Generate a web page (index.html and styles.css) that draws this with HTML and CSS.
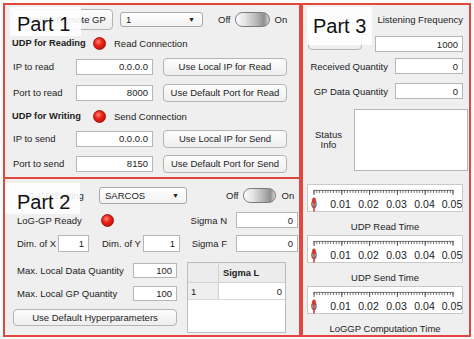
FILE: index.html
```html
<!DOCTYPE html>
<html>
<head>
<meta charset="utf-8">
<link rel="stylesheet" href="styles.css">
</head>
<body>
<div class="app">
  <section class="part p1">
    <div class="row r-top">
      <button class="btn btn-init">Initialize Remote GP</button>
      <div class="dd dd1"><span>1</span><span class="caret">▼</span></div>
      <div class="switch sw1"><span>Off</span><span class="toggle"></span><span class="on">On</span></div>
    </div>
    <div class="row r-sect"><b class="sect">UDP for Reading</b><span class="led"></span><span class="conn">Read Connection</span></div>
    <div class="row r-field gap7"><span class="lbl1">IP to read</span><div class="inp inp1">0.0.0.0</div><button class="btn btn-use">Use Local IP for Read</button></div>
    <div class="row r-field gap7"><span class="lbl1">Port to read</span><div class="inp inp1">8000</div><button class="btn btn-use">Use Default Port for Read</button></div>
    <div class="row r-sect gap7"><b class="sect">UDP for Writing</b><span class="led"></span><span class="conn">Send Connection</span></div>
    <div class="row r-field gap6"><span class="lbl1">IP to send</span><div class="inp inp1">0.0.0.0</div><button class="btn btn-use">Use Local IP for Send</button></div>
    <div class="row r-field gap6"><span class="lbl1">Port to send</span><div class="inp inp1">8150</div><button class="btn btn-use">Use Default Port for Send</button></div>
    <div class="tag tag1">Part 1</div>
  </section>

  <section class="part p2">
    <div class="row r2-1">
      <span class="lbl-set">LoG-GP Setting</span>
      <div class="dd dd2"><span>SARCOS</span><span class="caret">▼</span></div>
      <div class="switch sw2"><span>Off</span><span class="toggle t2"></span><span class="on">On</span></div>
    </div>
    <div class="row r2-2">
      <span class="lbl-ready">LoG-GP Ready</span><span class="led"></span>
      <div class="sig"><span class="sig-lbl">Sigma N</span><div class="inp inp-sig">0</div></div>
    </div>
    <div class="row r2-3">
      <span class="lbl-dim">Dim. of X</span><div class="inp inp-dx">1</div>
      <span class="lbl-dim dimy">Dim. of Y</span><div class="inp inp-dy">1</div>
      <div class="sig"><span class="sig-lbl">Sigma F</span><div class="inp inp-sig">0</div></div>
    </div>
    <div class="lower">
      <div class="lcol">
        <div class="row r-q"><span class="lbl-q">Max. Local Data Quantity</span><div class="inp inp-q">100</div></div>
        <div class="row r-q q2"><span class="lbl-q">Max. Local GP Quantity</span><div class="inp inp-q">100</div></div>
        <button class="btn btn-hyp">Use Default Hyperparameters</button>
      </div>
      <div class="tbl">
        <div class="thead"><div class="c0"></div><div class="c1 th">Sigma L</div></div>
        <div class="trow"><div class="c0 rh">1</div><div class="c1 num">0</div></div>
      </div>
    </div>
    <div class="tag tag2">Part 2</div>
  </section>

  <section class="part p3">
    <div class="top3">
      <button class="btn btn-listen"></button>
      <div class="lf">
        <span class="lf-lbl">Listening Frequency</span>
        <div class="inp inp-lf">1000</div>
      </div>
    </div>
    <div class="row r3 rq1"><span class="lbl3">Received Quantity</span><div class="inp inp3">0</div></div>
    <div class="row r3 rq2"><span class="lbl3">GP Data Quantity</span><div class="inp inp3">0</div></div>
    <div class="row status"><span class="st-lbl">Status<br>Info</span><div class="st-box"></div></div>

    <div class="gauge g-first">
      <svg width="156" height="28" viewBox="0 0 156 28">
        <defs><pattern id="mt1" x="6.6" y="0" width="2.78" height="28" patternUnits="userSpaceOnUse"><rect x="0" y="6" width="0.8" height="3.2" fill="#555"/></pattern></defs>
        <rect x="0.5" y="0.5" width="155" height="27" fill="#fff" stroke="#c9c9c9"/>
        <line x1="6.6" y1="6.4" x2="146.4" y2="6.4" stroke="#555" stroke-width="0.8"/>
        <rect x="6.6" y="6" width="140" height="3.2" fill="url(#mt1)"/>
        <g stroke="#444" stroke-width="0.9"><line x1="7" y1="6" x2="7" y2="11"/><line x1="34.8" y1="6" x2="34.8" y2="11"/><line x1="62.6" y1="6" x2="62.6" y2="11"/><line x1="90.4" y1="6" x2="90.4" y2="11"/><line x1="118.2" y1="6" x2="118.2" y2="11"/><line x1="146" y1="6" x2="146" y2="11"/></g>
        <g class="gl" text-anchor="middle"><text x="7" y="24">0</text><text x="33.5" y="24">0.01</text><text x="61.5" y="24">0.02</text><text x="89.5" y="24">0.03</text><text x="117.5" y="24">0.04</text><text x="145" y="24">0.05</text></g>
        <line x1="7" y1="14" x2="7" y2="27.5" stroke="#d8392e" stroke-width="1.6"/>
        <ellipse cx="7" cy="16.5" rx="1.9" ry="3" fill="#d8392e"/>
      </svg>
    </div>
    <div class="cap">UDP Read Time</div>

    <div class="gauge">
      <svg width="156" height="28" viewBox="0 0 156 28">
        <defs><pattern id="mt2" x="6.6" y="0" width="2.78" height="28" patternUnits="userSpaceOnUse"><rect x="0" y="6" width="0.8" height="3.2" fill="#555"/></pattern></defs>
        <rect x="0.5" y="0.5" width="155" height="27" fill="#fff" stroke="#c9c9c9"/>
        <line x1="6.6" y1="6.4" x2="146.4" y2="6.4" stroke="#555" stroke-width="0.8"/>
        <rect x="6.6" y="6" width="140" height="3.2" fill="url(#mt2)"/>
        <g stroke="#444" stroke-width="0.9"><line x1="7" y1="6" x2="7" y2="11"/><line x1="34.8" y1="6" x2="34.8" y2="11"/><line x1="62.6" y1="6" x2="62.6" y2="11"/><line x1="90.4" y1="6" x2="90.4" y2="11"/><line x1="118.2" y1="6" x2="118.2" y2="11"/><line x1="146" y1="6" x2="146" y2="11"/></g>
        <g class="gl" text-anchor="middle"><text x="7" y="24">0</text><text x="33.5" y="24">0.01</text><text x="61.5" y="24">0.02</text><text x="89.5" y="24">0.03</text><text x="117.5" y="24">0.04</text><text x="145" y="24">0.05</text></g>
        <line x1="7" y1="14" x2="7" y2="27.5" stroke="#d8392e" stroke-width="1.6"/>
        <ellipse cx="7" cy="16.5" rx="1.9" ry="3" fill="#d8392e"/>
      </svg>
    </div>
    <div class="cap">UDP Send Time</div>

    <div class="gauge">
      <svg width="156" height="28" viewBox="0 0 156 28">
        <defs><pattern id="mt3" x="6.6" y="0" width="2.78" height="28" patternUnits="userSpaceOnUse"><rect x="0" y="6" width="0.8" height="3.2" fill="#555"/></pattern></defs>
        <rect x="0.5" y="0.5" width="155" height="27" fill="#fff" stroke="#c9c9c9"/>
        <line x1="6.6" y1="6.4" x2="146.4" y2="6.4" stroke="#555" stroke-width="0.8"/>
        <rect x="6.6" y="6" width="140" height="3.2" fill="url(#mt3)"/>
        <g stroke="#444" stroke-width="0.9"><line x1="7" y1="6" x2="7" y2="11"/><line x1="34.8" y1="6" x2="34.8" y2="11"/><line x1="62.6" y1="6" x2="62.6" y2="11"/><line x1="90.4" y1="6" x2="90.4" y2="11"/><line x1="118.2" y1="6" x2="118.2" y2="11"/><line x1="146" y1="6" x2="146" y2="11"/></g>
        <g class="gl" text-anchor="middle"><text x="7" y="24">0</text><text x="33.5" y="24">0.01</text><text x="61.5" y="24">0.02</text><text x="89.5" y="24">0.03</text><text x="117.5" y="24">0.04</text><text x="145" y="24">0.05</text></g>
        <line x1="7" y1="14" x2="7" y2="27.5" stroke="#d8392e" stroke-width="1.6"/>
        <ellipse cx="7" cy="16.5" rx="1.9" ry="3" fill="#d8392e"/>
      </svg>
    </div>
    <div class="cap">LoGGP Computation Time</div>

    <div class="tag tag3">Part 3</div>
  </section>
</div>
</body>
</html>
```

FILE: styles.css
```css
* { box-sizing: border-box; }

html, body { margin: 0; padding: 0; }

body {
  width: 474px;
  height: 339px;
  background: #fbfbfb;
  font-family: "Liberation Sans", Arial, sans-serif;
  font-size: 9.5px;
  color: #222;
  overflow: hidden;
}

.app {
  display: grid;
  grid-template-columns: 298px 170px;
  grid-template-rows: 176px 158px;
  padding: 3px 0 0 3px;
}

.part {
  position: relative;
  background: #efefef;
  border: 2px solid #e0473d;
}

.p1 { grid-column: 1; grid-row: 1; padding-top: 4px; }
.p2 { grid-column: 1; grid-row: 2; border-top: 0; padding-top: 7px; padding-left: 12px; padding-right: 1px; }
.p3 { grid-column: 2; grid-row: 1 / span 2; }

.row { display: flex; align-items: center; }

/* common widgets */
.btn {
  display: flex;
  align-items: center;
  justify-content: center;
  margin: 0;
  padding: 0;
  font-family: inherit;
  font-size: 9.5px;
  color: #222;
  background: linear-gradient(#fdfdfd, #eeeeee);
  border: 1px solid #b4b4b4;
  border-radius: 4px;
  white-space: nowrap;
}

.inp {
  display: flex;
  align-items: center;
  justify-content: flex-end;
  padding-right: 4px;
  background: #fff;
  border: 1px solid #b6b6b6;
  white-space: nowrap;
}

.dd {
  display: flex;
  align-items: center;
  justify-content: space-between;
  padding: 0 7px 0 5px;
  background: linear-gradient(#fefefe, #f3f3f3);
  border: 1px solid #a9a9a9;
  border-radius: 3px;
}

.caret { font-size: 7px; color: #222; }

.switch { display: flex; align-items: center; }

.toggle {
  display: block;
  width: 35px;
  height: 15px;
  margin-left: 4px;
  border: 1px solid #7a7a7a;
  border-radius: 8px;
  background: linear-gradient(90deg, #fcfcfc 0%, #e6e6e6 25%, #b9b9b9 60%, #8f8f8f 85%, #d8d8d8 100%);
}

.on { margin-left: 5px; }

.led {
  display: block;
  width: 13px;
  height: 13px;
  border-radius: 50%;
  border: 1px solid #9a1810;
  background: radial-gradient(circle at 40% 35%, #ff8a7c 0%, #f02a1c 35%, #c8120a 75%, #9a0d07 100%);
}

/* Part 1 */
.r-top { height: 21px; padding-left: 7px; }
.btn-init { width: 101px; height: 21px; }
.dd1 { width: 83px; height: 15px; margin-left: 7px; }
.sw1 { margin-left: 15px; }

.r-sect { height: 14px; margin-top: 6px; padding-left: 7px; }
.sect { width: 81px; font-weight: bold; font-size: 9.3px; white-space: nowrap; }
.conn { margin-left: 8px; }

.r-field { height: 19px; padding-left: 8px; }
.lbl1 { width: 63px; }
.inp1 { width: 77px; height: 16px; }
.btn-use { width: 124px; height: 18px; margin-left: 10px; }

.gap7 { margin-top: 7px; }
.gap6 { margin-top: 6px; }

/* Part 2 */
.r2-1 { height: 19px; }
.lbl-set { width: 82px; white-space: nowrap; }
.dd2 { width: 88px; height: 17px; }
.sw2 { margin-left: 39px; }
.t2 { width: 33px; }
.sw2 .on { margin-left: 6px; }

.r2-2 { height: 16px; margin-top: 7px; }
.lbl-ready { width: 84px; }

.sig { display: flex; align-items: center; margin-left: auto; }
.sig-lbl { width: 56px; padding-right: 9px; text-align: right; }
.inp-sig { width: 62px; height: 16px; }

.r2-3 { height: 19px; margin-top: 6px; }
.r2-3 .inp-sig { height: 17px; }
.lbl-dim { width: 41px; white-space: nowrap; }
.dimy { margin-left: 13px; }
.inp-dx { width: 31px; height: 17px; }
.inp-dy { width: 37px; height: 17px; }

.lower { display: flex; margin-top: 9px; margin-left: -4px; }
.lcol { width: 164px; display: flex; flex-direction: column; }
.r-q { height: 16px; }
.q2 { margin-top: 7px; }
.lbl-q { width: 120px; padding-left: 4px; white-space: nowrap; }
.inp-q { width: 44px; height: 15px; }
.btn-hyp { width: 164px; height: 17px; margin-top: 8px; }

.tbl {
  width: 99px;
  height: 71px;
  margin-left: 10px;
  background: #fff;
  border: 1px solid #bcbcbc;
}
.thead { display: flex; height: 20px; background: #ececec; border-bottom: 1px solid #d2d2d2; }
.trow { display: flex; height: 17px; border-bottom: 1px solid #d9d9d9; }
.c0 { width: 31px; border-right: 1px solid #d2d2d2; display: flex; align-items: center; padding-left: 3px; }
.c1 { flex: 1; display: flex; align-items: center; padding-left: 4px; }
.th { font-weight: bold; font-size: 9.3px; }
.rh { background: #efefef; }
.num { justify-content: flex-end; padding-right: 3px; }

/* Part 3 */
.top3 { display: flex; height: 47px; }
.btn-listen { width: 54px; height: 20px; margin-left: 5px; align-self: flex-end; margin-bottom: 2px; }
.lf { width: 88px; margin-left: 13px; display: flex; flex-direction: column; align-items: flex-end; }
.lf-lbl { margin-top: 9px; line-height: 12px; white-space: nowrap; }
.inp-lf { width: 88px; height: 16px; margin-top: 10px; }

.r3 { height: 16px; }
.rq1 { margin-top: 6px; }
.rq2 { margin-top: 9px; }
.lbl3 { width: 85px; text-align: right; white-space: nowrap; }
.inp3 { width: 68px; height: 16px; margin-left: 7px; }

.status { height: 62px; margin-top: 10px; }
.st-lbl { width: 51px; text-align: center; line-height: 10.5px; }
.st-box { width: 114px; height: 62px; background: #fff; border: 1px solid #b6b6b6; }

.gauge { width: 156px; height: 28px; margin-left: 4px; }
.g-first { margin-top: 13px; }
.gauge svg { display: block; }
.gl { font-family: "Liberation Sans", Arial, sans-serif; font-size: 10.5px; fill: #222; }

.cap { width: 156px; height: 23px; margin-left: 4px; padding-top: 9px; line-height: 12px; text-align: center; white-space: nowrap; }

/* overlay labels */
.tag {
  position: absolute;
  background: rgba(255, 255, 255, 0.88);
  font-family: "Liberation Sans", Arial, sans-serif;
  font-size: 20px;
  line-height: 20px;
  color: #111;
  white-space: nowrap;
}
.tag1 { left: 5px; top: 2px; width: 71px; height: 29px; padding: 7px 0 0 7px; }
.tag2 { left: 0; top: 4px; width: 75px; height: 31px; padding: 9px 0 0 12px; }
.tag3 { left: 4px; top: 2px; width: 65px; height: 38px; padding: 9px 0 0 6px; }
```
